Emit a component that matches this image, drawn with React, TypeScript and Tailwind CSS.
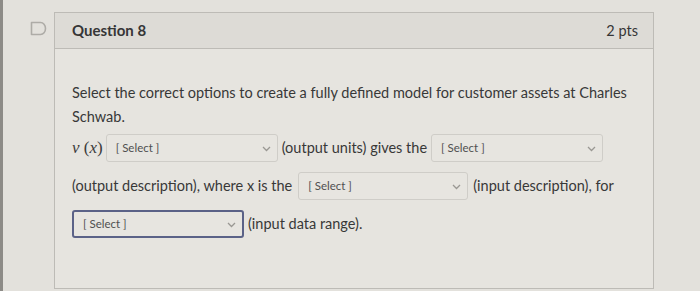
import React from 'react';

function Dropdown({ width, focused }: { width: string; focused?: boolean }) {
  return (
    <div
      className={`${width} h-[28px] flex items-center justify-between rounded-[3px] bg-[#e7e5e0] pl-[9px] pr-[6px] ${
        focused ? 'border-2 border-[#5b6287]' : 'border border-[#cfcdc8]'
      }`}
    >
      <span className="text-[11.5px] text-[#505050]">[ Select ]</span>
      <svg width="9" height="6" viewBox="0 0 9 6" className="mt-[1px]">
        <path d="M1 1 L4.5 4.5 L8 1" fill="none" stroke="#9a9893" strokeWidth="1.3" />
      </svg>
    </div>
  );
}

export default function App() {
  return (
    <div
      className="w-[700px] h-[291px] bg-[#e3e1dc] flex overflow-hidden"
      style={{ fontFamily: 'Lato, "Open Sans", sans-serif' }}
    >
      {/* borde oscuro izquierdo */}
      <div className="w-[3px] bg-[#8d8b87]" />

      <div className="w-[51px] pt-[21px] pl-[27px]">
        <svg width="17" height="15" viewBox="0 0 17 15">
          <path
            d="M1.5 1.5 H10.5 A5 6 0 0 1 10.5 13.5 H1.5 Z"
            fill="none"
            stroke="#aeaca7"
            strokeWidth="1.6"
            strokeLinejoin="round"
          />
        </svg>
      </div>

      <div className="mt-[12px] w-[600px] h-[277px] border border-[#bdbbb6] bg-[#e6e4df] flex flex-col">
        {/* Encabezado */}
        <div className="h-[36px] shrink-0 bg-[#dddbd6] border-b border-[#bdbbb6] flex items-center justify-between pl-[17px] pr-[15px]">
          <span className="text-[15px] font-bold text-[#363636]">Question 8</span>
          <span className="text-[14.5px] text-[#363636]">2 pts</span>
        </div>

        {/* Cuerpo */}
        <div className="pl-[17px] pt-[32px] text-[14.5px] text-[#383838]">
          <p className="leading-[24px] w-[575px]">
            Select the correct options to create a fully defined model for customer assets at Charles Schwab.
          </p>

          <div className="h-[38px] flex items-center">
            <span
              className="text-[17px] text-[#3b3b3b] mr-[3px] whitespace-pre"
              style={{ fontFamily: '"Liberation Serif", "DejaVu Serif", serif' }}
            >
              <i>v</i> (<i>x</i>)
            </span>
            <Dropdown width="w-[172px]" />
            <span className="ml-[4px] mr-[4px]">(output units) gives the</span>
            <Dropdown width="w-[172px]" />
          </div>

          <div className="h-[38px] flex items-center">
            <span className="mr-[6px]">(output description), where x is the</span>
            <Dropdown width="w-[170px]" />
            <span className="ml-[5px]">(input description), for</span>
          </div>

          <div className="h-[38px] flex items-center">
            <Dropdown width="w-[172px]" focused />
            <span className="ml-[4px]">(input data range).</span>
          </div>
        </div>
      </div>
    </div>
  );
}
